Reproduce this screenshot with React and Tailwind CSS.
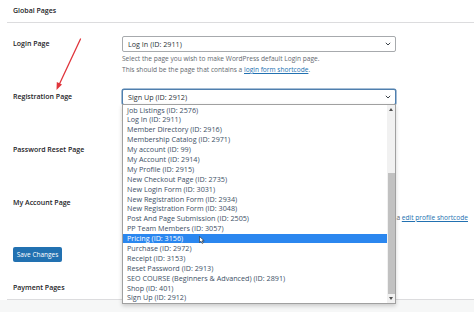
import React from "react";

const pages = [
  "Job Listings (ID: 2576)",
  "Log In (ID: 2911)",
  "Member Directory (ID: 2916)",
  "Membership Catalog (ID: 2971)",
  "My account (ID: 99)",
  "My Account (ID: 2914)",
  "My Profile (ID: 2915)",
  "New Checkout Page (ID: 2735)",
  "New Login Form (ID: 3031)",
  "New Registration Form (ID: 2934)",
  "New Registration Form (ID: 3048)",
  "Post And Page Submission (ID: 2505)",
  "PP Team Members (ID: 3057)",
  "Pricing (ID: 3156)",
  "Purchase (ID: 2972)",
  "Receipt (ID: 3153)",
  "Reset Password (ID: 2913)",
  "SEO COURSE (Beginners & Advanced) (ID: 2891)",
  "Shop (ID: 401)",
  "Sign Up (ID: 2912)",
];

function Chevron() {
  return (
    <svg width="6" height="4" viewBox="0 0 6 4" className="shrink-0">
      <path d="M0.8 0.8 L3 3 L5.2 0.8" fill="none" stroke="#3c434a" strokeWidth="1" />
    </svg>
  );
}

function Select({ value, focused }) {
  return (
    <div
      className={`flex h-[16px] w-[274px] items-center justify-between rounded-[2px] border bg-white pl-[5px] pr-[4px] text-[7.2px] text-[#2c3338] ${
        focused ? "border-[#4f7fae] shadow-[0_0_0_0.5px_#4f7fae]" : "border-[#a7aaad]"
      }`}
    >
      <span>{value}</span>
      <Chevron />
    </div>
  );
}

function Row({ label, value, focused, help, first }) {
  return (
    <div className={`flex ${first ? "pt-[13px]" : "pt-[14px]"}`}>
      <div className="flex h-[16px] w-[115px] shrink-0 items-center pl-[6px] text-[7px] font-semibold text-[#1d2327]">
        {label}
      </div>
      <div>
        <Select value={value} focused={focused} />
        <div className="mt-[1px] text-[6.6px] leading-[11px] text-[#646970]">{help}</div>
      </div>
    </div>
  );
}

export default function App() {
  return (
    <div
      className="relative h-[312px] w-[474px] overflow-hidden bg-[#f6f7f7]"
      style={{ fontFamily: '"Open Sans", "Noto Sans", sans-serif' }}
    >
      <div className="bg-white pl-[7px]">
        <div className="flex h-[23px] items-center border-b border-[#dcdcde] pl-[6px] text-[7px] font-semibold text-[#1d2327]">
          Global Pages
        </div>

        <Row
          first
          label="Login Page"
          value="Log In (ID: 2911)"
          help={
            <>
              <div>Select the page you wish to make WordPress default Login page.</div>
              <div>
                This should be the page that contains a{" "}
                <a className="text-[#2271b1] underline">login form shortcode</a>.
              </div>
            </>
          }
        />
        <Row
          label="Registration Page"
          value="Sign Up (ID: 2912)"
          focused
          help={
            <>
              <div>Select the page you wish to make WordPress default Registration page.</div>
              <div>
                This should be the page that contains a{" "}
                <a className="text-[#2271b1] underline">registration form shortcode</a>.
              </div>
            </>
          }
        />
        <Row
          label="Password Reset Page"
          value="Reset Password (ID: 2913)"
          help={
            <>
              <div>Select the page you wish to make WordPress default Password Reset page.</div>
              <div>
                This should be the page that contains a{" "}
                <a className="text-[#2271b1] underline">password reset shortcode</a>.
              </div>
            </>
          }
        />
        <Row
          label="My Account Page"
          value="My Account (ID: 2914)"
          help={
            <div className="whitespace-nowrap">
              Select the page you wish to use as the My Account page. This page should always contain a{" "}
              <a className="text-[#2271b1] underline">edit profile shortcode</a>
            </div>
          }
        />

        <div className="pb-[15px] pl-[6px] pt-[24px]">
          <button className="flex h-[15px] w-[49px] items-center justify-center rounded-[2px] bg-[#2271b1] text-[6.5px] text-white">
            Save Changes
          </button>
        </div>

        <div className="flex h-[23px] items-center border-b border-[#dcdcde] pl-[6px] text-[7px] font-semibold text-[#1d2327]">
          Payment Pages
        </div>
      </div>

      {/* open select list */}
      <div className="absolute left-[122px] top-[104px] flex h-[200px] w-[274px] border border-[#a0a0a0] bg-white text-[7.2px] shadow-[0_2px_4px_rgba(0,0,0,0.18)]">
        <div className="flex-1">
          {pages.map((p) => (
            <div
              key={p}
              className={`flex h-[9.9px] items-center whitespace-nowrap pl-[4px] ${
                p.startsWith("Pricing") ? "bg-[#2b87ef] text-white" : "text-[#3d4f66]"
              }`}
            >
              {p}
            </div>
          ))}
        </div>
        <div className="flex w-[8px] flex-col items-center bg-[#f1f1f1]">
          <div className="flex h-[9px] items-center">
            <svg width="4" height="3" viewBox="0 0 4 3">
              <path d="M0 3 L2 0 L4 3 Z" fill="#505050" />
            </svg>
          </div>
          <div className="h-[59px]" />
          <div className="w-[7px] flex-1 bg-[#c1c1c1]" />
          <div className="flex h-[9px] items-center">
            <svg width="4" height="3" viewBox="0 0 4 3">
              <path d="M0 0 L4 0 L2 3 Z" fill="#505050" />
            </svg>
          </div>
        </div>
      </div>

      {/* mouse cursor */}
      <svg className="absolute left-[199px] top-[236px]" width="6" height="8" viewBox="0 0 6 8">
        <path d="M0.5 0.5 L0.5 6.5 L2 5.2 L3.2 7.5 L4.2 7 L3.1 4.8 L5.2 4.8 Z" fill="white" stroke="#222" strokeWidth="0.6" />
      </svg>

      {/* red annotation arrow */}
      <svg className="pointer-events-none absolute left-0 top-0" width="474" height="312" viewBox="0 0 474 312">
        <line x1="80.5" y1="39" x2="58.5" y2="86" stroke="#e0353c" strokeWidth="1.3" strokeLinecap="round" />
        <path d="M56.5 90 L56.8 82 L62 84.5 Z" fill="#e0353c" />
      </svg>
    </div>
  );
}
